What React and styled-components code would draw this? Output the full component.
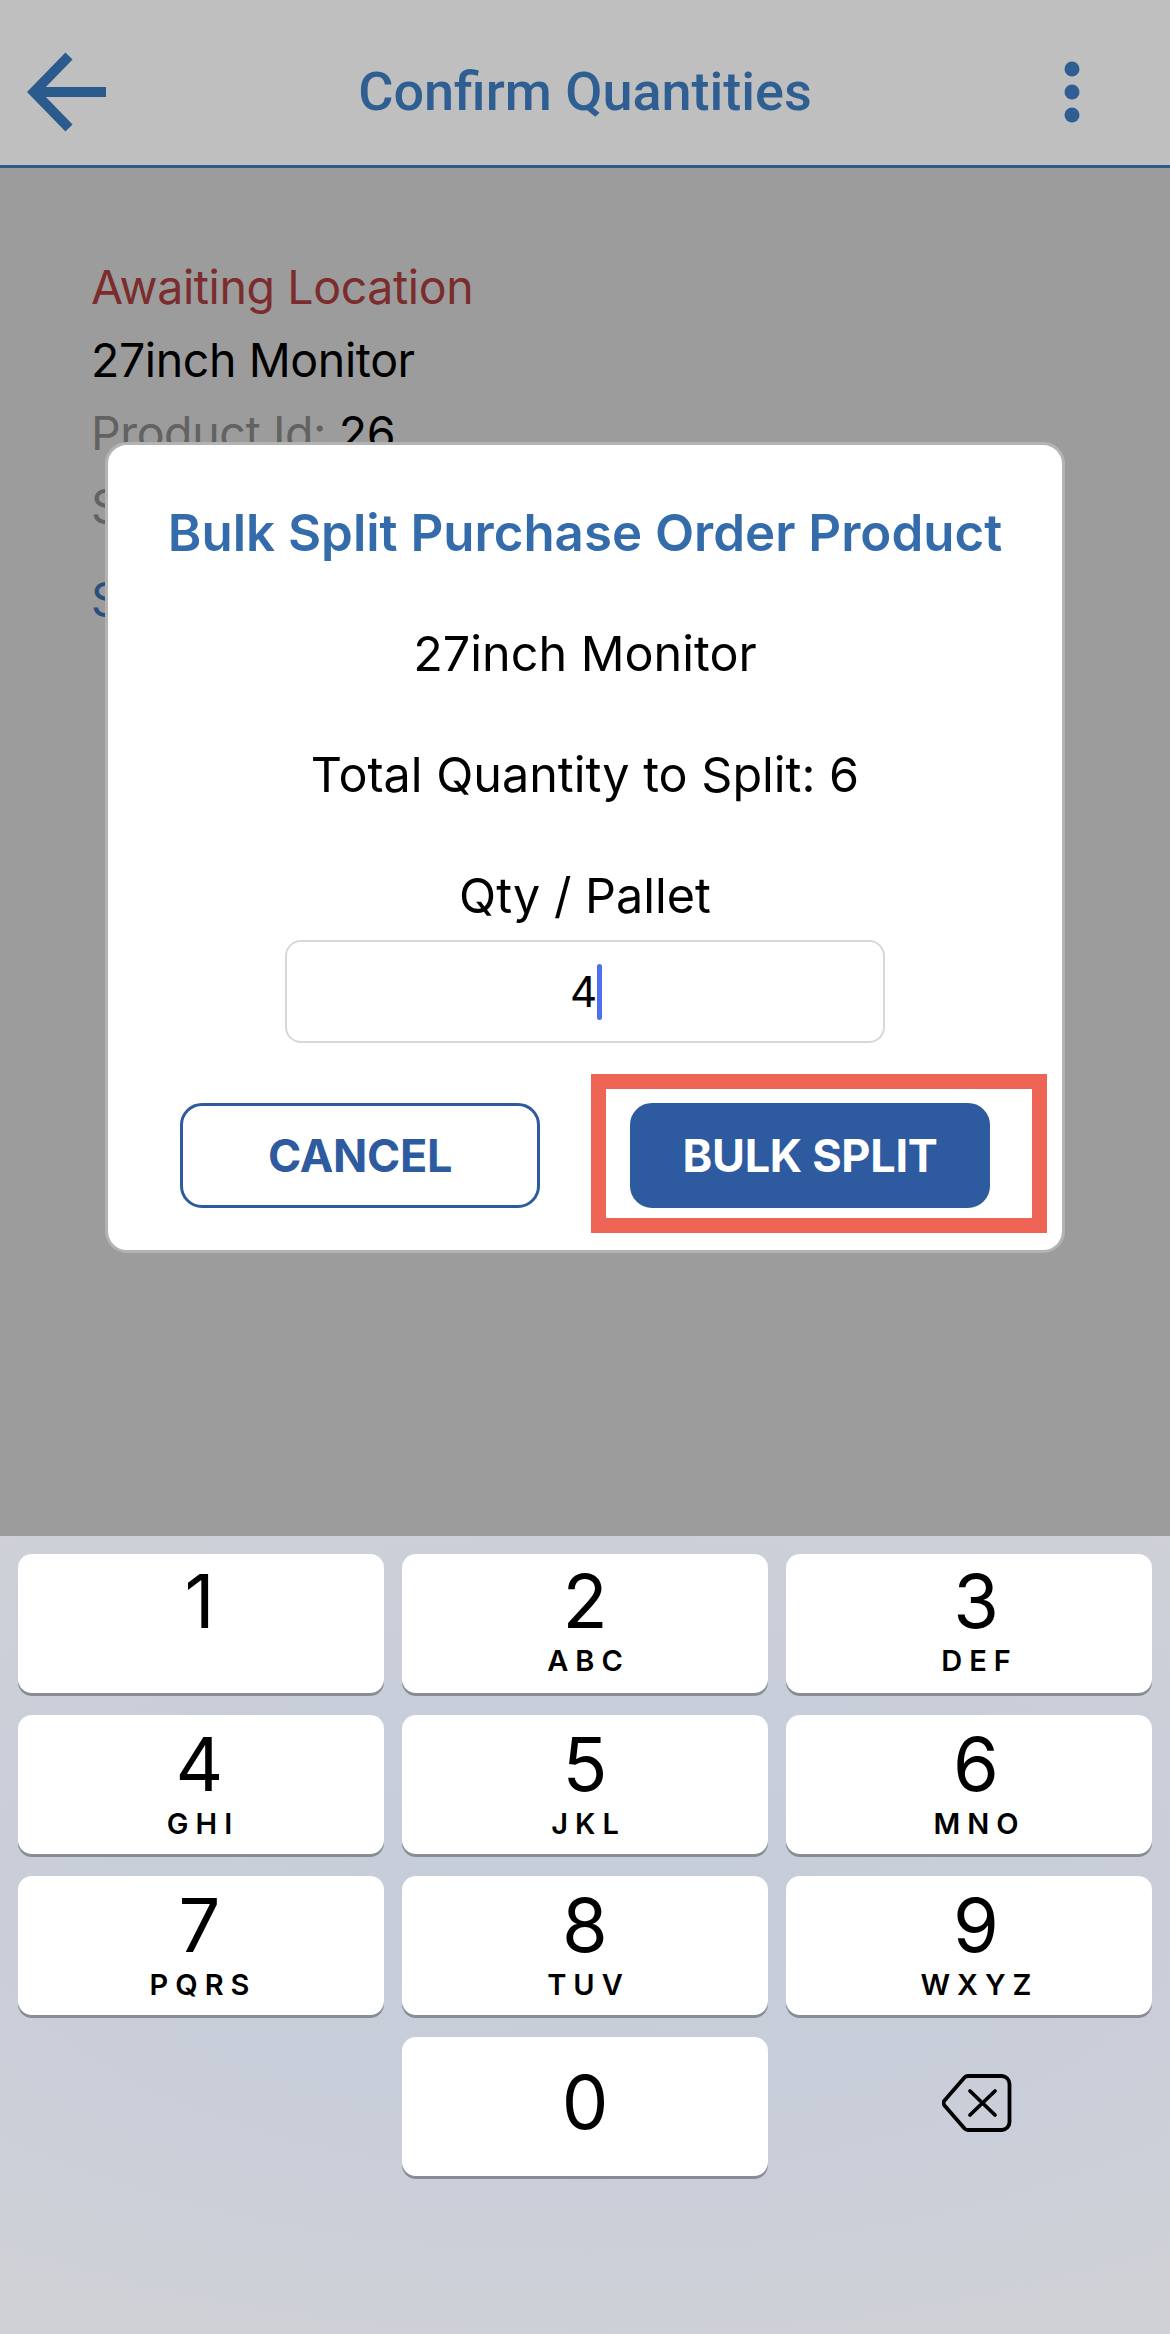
import React from "react";
import styled, { createGlobalStyle } from "styled-components";

const Global = createGlobalStyle`
  html, body { margin: 0; padding: 0; background: #9c9c9c; }
  * { box-sizing: border-box; }
`;

const Screen = styled.div`
  position: relative;
  width: 1170px;
  height: 2334px;
  display: flex;
  flex-direction: column;
  overflow: hidden;
  font-family: Inter, "Liberation Sans", sans-serif;
  background: #9c9c9c;
`;

const Header = styled.header`
  height: 168px;
  flex: none;
  padding-top: 19px;
  display: grid;
  grid-template-columns: 1fr auto 1fr;
  align-items: center;
  background: #bfbfbf;
  border-bottom: 3px solid #2f5a88;
`;

const LeftSlot = styled.div`
  padding-left: 27px;
  display: flex;
`;

const RightSlot = styled.div`
  padding-right: 90px;
  display: flex;
  justify-content: flex-end;
`;

const HeaderTitle = styled.h1`
  margin: 0;
  font: 500 54px/60px Roboto, Inter, sans-serif;
  color: #2f5f92;
`;

const Body = styled.main`
  flex: 1;
  padding: 83px 91px 0;
`;

const Line = styled.div`
  font-size: 46.5px;
  line-height: 73px;
  letter-spacing: -0.4px;
  white-space: nowrap;
  color: ${(p) => p.$color || "#000"};
  margin-bottom: ${(p) => p.$gap || 0}px;
`;

const Muted = styled.span`
  color: #626262;
`;

const Keyboard = styled.section`
  flex: none;
  height: 798px;
  padding: 18px 18px 0;
  background: radial-gradient(ellipse 90% 60% at 50% 45%, #c5cdda 0%, #c9ced9 55%, #cfd1d6 100%);
  display: grid;
  grid-template-columns: repeat(3, 1fr);
  grid-auto-rows: 139px;
  column-gap: 18px;
  row-gap: 22px;
  align-content: start;
`;

const Key = styled.div`
  background: #fff;
  border-radius: 14px;
  box-shadow: 0 3px 0 #898c93;
  display: flex;
  flex-direction: column;
  align-items: center;
  padding-top: ${(p) => p.$top}px;
  padding-left: ${(p) => p.$left || 0}px;
  padding-right: ${(p) => p.$right || 0}px;
  color: #000;
`;

const Digit = styled.span`
  font-size: 74px;
  line-height: 74px;
  font-weight: 400;
`;

const Letters = styled.span`
  font-size: 29px;
  line-height: 30px;
  font-weight: 600;
  letter-spacing: 7px;
  margin-right: -7px;
  margin-top: 8px;
`;

const Blank = styled.div``;

const DeleteCell = styled.div`
  display: flex;
  align-items: center;
  justify-content: center;
  padding: 0 0 8px 15px;
`;

const Dialog = styled.div`
  position: absolute;
  left: 105px;
  top: 442px;
  width: 960px;
  height: 811px;
  background: #fff;
  border: 3px solid #b3b3b3;
  border-radius: 22px;
  display: flex;
  flex-direction: column;
  align-items: center;
`;

const DialogTitle = styled.h2`
  margin: 58px 0 0;
  font-size: 51px;
  line-height: 60px;
  font-weight: 600;
  color: #346cab;
  white-space: nowrap;
`;

const DialogText = styled.div`
  margin-top: 61px;
  font-size: 48.5px;
  line-height: 60px;
  color: #000;
  white-space: nowrap;
`;

const Field = styled.div`
  margin-top: 14px;
  width: 600px;
  height: 103px;
  border: 2px solid #d8d8d8;
  border-radius: 16px;
  display: flex;
  align-items: center;
  justify-content: center;
`;

const FieldValue = styled.span`
  font-size: 42px;
  line-height: 56px;
  color: #000;
  margin-left: 2px;
`;

const Caret = styled.span`
  width: 5px;
  height: 56px;
  border-radius: 3px;
  background: #4f6ef0;
`;

const Actions = styled.div`
  margin-top: 60px;
  width: 100%;
  padding-left: 72px;
  display: flex;
  gap: 90px;
`;

const Button = styled.button`
  width: 360px;
  height: 105px;
  border-radius: 22px;
  border: 3px solid #2e5ba0;
  background: ${(p) => p.$primary ? "#2e5ba0" : "#fff"};
  color: ${(p) => p.$primary ? "#fff" : "#2e5ba0"};
  font: 700 45px/50px Inter, sans-serif;
  letter-spacing: -0.3px;
  padding: 0;
`;

const Highlight = styled.div`
  position: absolute;
  left: 591px;
  top: 1074px;
  width: 456px;
  height: 159px;
  border: 15px solid #ee6555;
  pointer-events: none;
`;

const BackArrow = () => (
  <svg width="80" height="80" viewBox="0 0 80 80" fill="none" stroke="#2b5a8c" strokeWidth="10">
    <path d="M7 40H79" />
    <path d="M42 4L7 40L42 76" />
  </svg>
);

const MoreDots = () => (
  <svg width="16" height="62" viewBox="0 0 16 62" fill="#2f5f92">
    <circle cx="8" cy="8" r="7.5" />
    <circle cx="8" cy="31" r="7.5" />
    <circle cx="8" cy="54" r="7.5" />
  </svg>
);

const DeleteIcon = () => (
  <svg width="70" height="58" viewBox="0 0 70 58" fill="none" stroke="#000" strokeWidth="3.8" strokeLinejoin="round" strokeLinecap="round">
    <path d="M26 2H60A8 8 0 0 1 67.500 10V48A8 8 0 0 1 60 56H26A5 5 0 0 1 22.500 54.500L2.500 31.500A4 4 0 0 1 2.500 26.500L22.500 3.500A5 5 0 0 1 26 2Z" />
    <path d="M28 17L53 41M53 17L28 41" />
  </svg>
);

const keys = [
  ["1", ""], ["2", "ABC"], ["3", "DEF"],
  ["4", "GHI"], ["5", "JKL"], ["6", "MNO"],
  ["7", "PQRS"], ["8", "TUV"], ["9", "WXYZ"],
];

export default function App() {
  return (
    <Screen>
      <Global />
      <Header>
        <LeftSlot><BackArrow /></LeftSlot>
        <HeaderTitle>Confirm Quantities</HeaderTitle>
        <RightSlot><MoreDots /></RightSlot>
      </Header>
      <Body>
        <Line $color="#7b2c2c">Awaiting Location</Line>
        <Line>27inch Monitor</Line>
        <Line><Muted>Product Id:</Muted> 26</Line>
        <Line $gap={20}><Muted>SKU:</Muted> 26</Line>
        <Line $color="#2a4f7c">Split</Line>
      </Body>
      <Keyboard>
        {keys.map(([d, l], i) => (
          <Key key={d} $top={i < 3 ? 10 : 12} $left={i % 3 === 2 ? 14 : 0} $right={i % 3 === 0 ? 3 : 0}>
            <Digit>{d}</Digit>
            {l && <Letters>{l}</Letters>}
          </Key>
        ))}
        <Blank />
        <Key $top={28}><Digit>0</Digit></Key>
        <DeleteCell><DeleteIcon /></DeleteCell>
      </Keyboard>
      <Dialog>
        <DialogTitle>Bulk Split Purchase Order Product</DialogTitle>
        <DialogText>27inch Monitor</DialogText>
        <DialogText>Total Quantity to Split: 6</DialogText>
        <DialogText>Qty / Pallet</DialogText>
        <Field><FieldValue>4</FieldValue><Caret /></Field>
        <Actions>
          <Button>CANCEL</Button>
          <Button $primary>BULK SPLIT</Button>
        </Actions>
      </Dialog>
      <Highlight />
    </Screen>
  );
}
